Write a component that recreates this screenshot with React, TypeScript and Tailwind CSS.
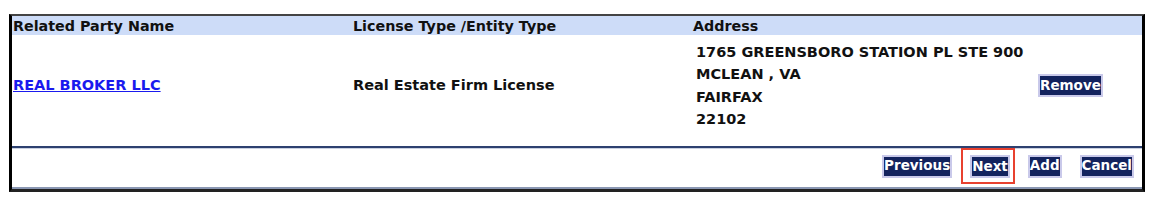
const font = { fontFamily: '"DejaVu Sans", Verdana, sans-serif' }

function NavButton({ label, focused }: { label: string; focused?: boolean }) {
  const btn = (
    <button className="h-[23px] border-2 border-[#c9c9ea] bg-[#13235e] px-0 text-[13.5px] font-bold leading-none text-white">
      {label}
    </button>
  )
  if (!focused) return btn
  return <div className="border-2 border-[#e8412f] py-[4px] pl-[7px] pr-[3px]">{btn}</div>
}

export default function App() {
  return (
    <div className="h-[204px] w-[1156px] bg-white pl-[9px] pt-[14px]" style={font}>
      <div className="w-[1136px] border-t-2 border-l-[3px] border-r-[3px] border-b-[3px] border-t-[#444] border-l-black border-r-black border-b-[#222]">
        <div className="grid h-[19px] grid-cols-[340px_340px_1fr] items-center bg-[#cddcf8] pl-[1px] text-[14.3px] font-bold text-[#111]">
          <div>Related Party Name</div>
          <div>License Type /Entity Type</div>
          <div>Address</div>
        </div>
        <div className="grid h-[111px] grid-cols-[340px_340px_345px_1fr] items-center pb-[10px] pl-[1px] text-[14.5px] font-bold text-[#111]">
          <a href="#" className="text-[#1a1aee] underline">REAL BROKER LLC</a>
          <div>Real Estate Firm License</div>
          <div className="pl-[3px] leading-[22.5px]">
            <div>1765 GREENSBORO STATION PL STE 900</div>
            <div>MCLEAN , VA</div>
            <div>FAIRFAX</div>
            <div>22102</div>
          </div>
          <div>
            <NavButton label="Remove" />
          </div>
        </div>
        <div className="h-[2px] bg-[#2d4170]" />
        <div className="h-[1px] bg-[#c9d0e0]" />
        <div className="flex h-[38px] items-center justify-end gap-[18px] pb-[4px] pr-[8px]">
          <NavButton label="Previous" />
          <div className="-ml-[9px] -mr-[5px]">
            <NavButton label="Next" focused />
          </div>
          <NavButton label="Add" />
          <NavButton label="Cancel" />
        </div>
        <div className="h-[2px] bg-[#8a97b3]" />
      </div>
    </div>
  )
}
